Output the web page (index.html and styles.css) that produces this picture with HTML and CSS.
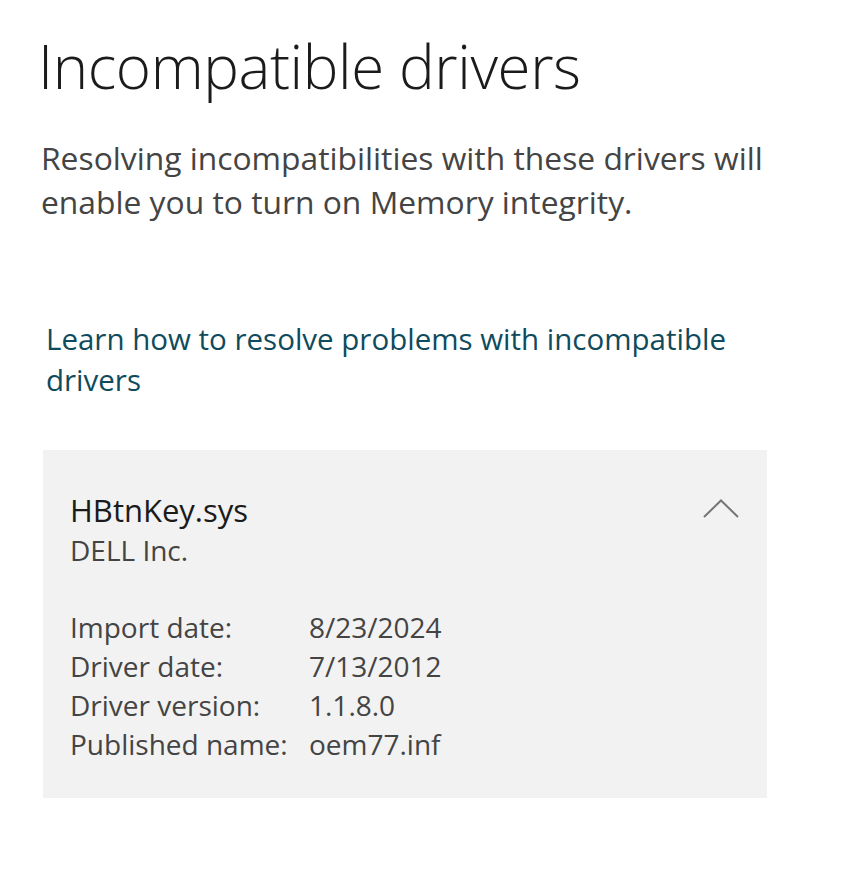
FILE: index.html
```html
<!DOCTYPE html>
<html lang="en">
<head>
<meta charset="utf-8">
<title>Incompatible drivers</title>
<link rel="stylesheet" href="styles.css">
</head>
<body>
<main class="page">
  <h1 class="title">Incompatible drivers</h1>
  <p class="desc">Resolving incompatibilities with these drivers will enable you to turn on Memory integrity.</p>
  <a class="link" href="#">Learn how to resolve problems with incompatible drivers</a>
  <section class="card">
    <div class="card-head">
      <div>
        <div class="name">HBtnKey.sys</div>
        <div class="vendor">DELL Inc.</div>
      </div>
      <svg class="chev" width="36" height="20" viewBox="0 0 36 20"><path d="M1 18 L18 1.5 L35 18" fill="none" stroke="#767676" stroke-width="2"/></svg>
    </div>
    <dl class="props">
      <dt>Import date:</dt><dd>8/23/2024</dd>
      <dt>Driver date:</dt><dd>7/13/2012</dd>
      <dt>Driver version:</dt><dd>1.1.8.0</dd>
      <dt>Published name:</dt><dd>oem77.inf</dd>
    </dl>
  </section>
</main>
</body>
</html>
```
FILE: styles.css
```css
html, body { margin: 0; padding: 0; background: #fff; }
body { font-family: "Open Sans", "Noto Sans", sans-serif; }
.page { padding: 24px 0 0 38px; width: 760px; }
.title { margin: 0; font-weight: 300; font-size: 60px; line-height: 84px; color: #1b1b1b; letter-spacing: -0.4px; }
.desc { margin: 28px 0 0 3px; font-size: 31.8px; line-height: 44px; color: #444; width: 740px; }
.link { display: block; margin: 94px 0 0 8px; font-size: 29.5px; line-height: 41px; color: #0f4b5c; text-decoration: none; width: 720px; }
.card { margin: 50px 0 0 5px; width: 724px; background: #f2f2f2; padding: 40px 28px 34px 27px; box-sizing: border-box; }
.card-head { display: flex; justify-content: space-between; align-items: flex-start; }
.name { font-size: 31px; line-height: 40px; color: #1b1b1b; }
.vendor { font-size: 28px; line-height: 40px; color: #444; }
.chev { margin: 9px 0 0 0; }
.props { display: grid; grid-template-columns: 239px auto; margin: 38px 0 0 0; font-size: 28px; line-height: 39px; color: #444; }
.props dt, .props dd { margin: 0; }
```
